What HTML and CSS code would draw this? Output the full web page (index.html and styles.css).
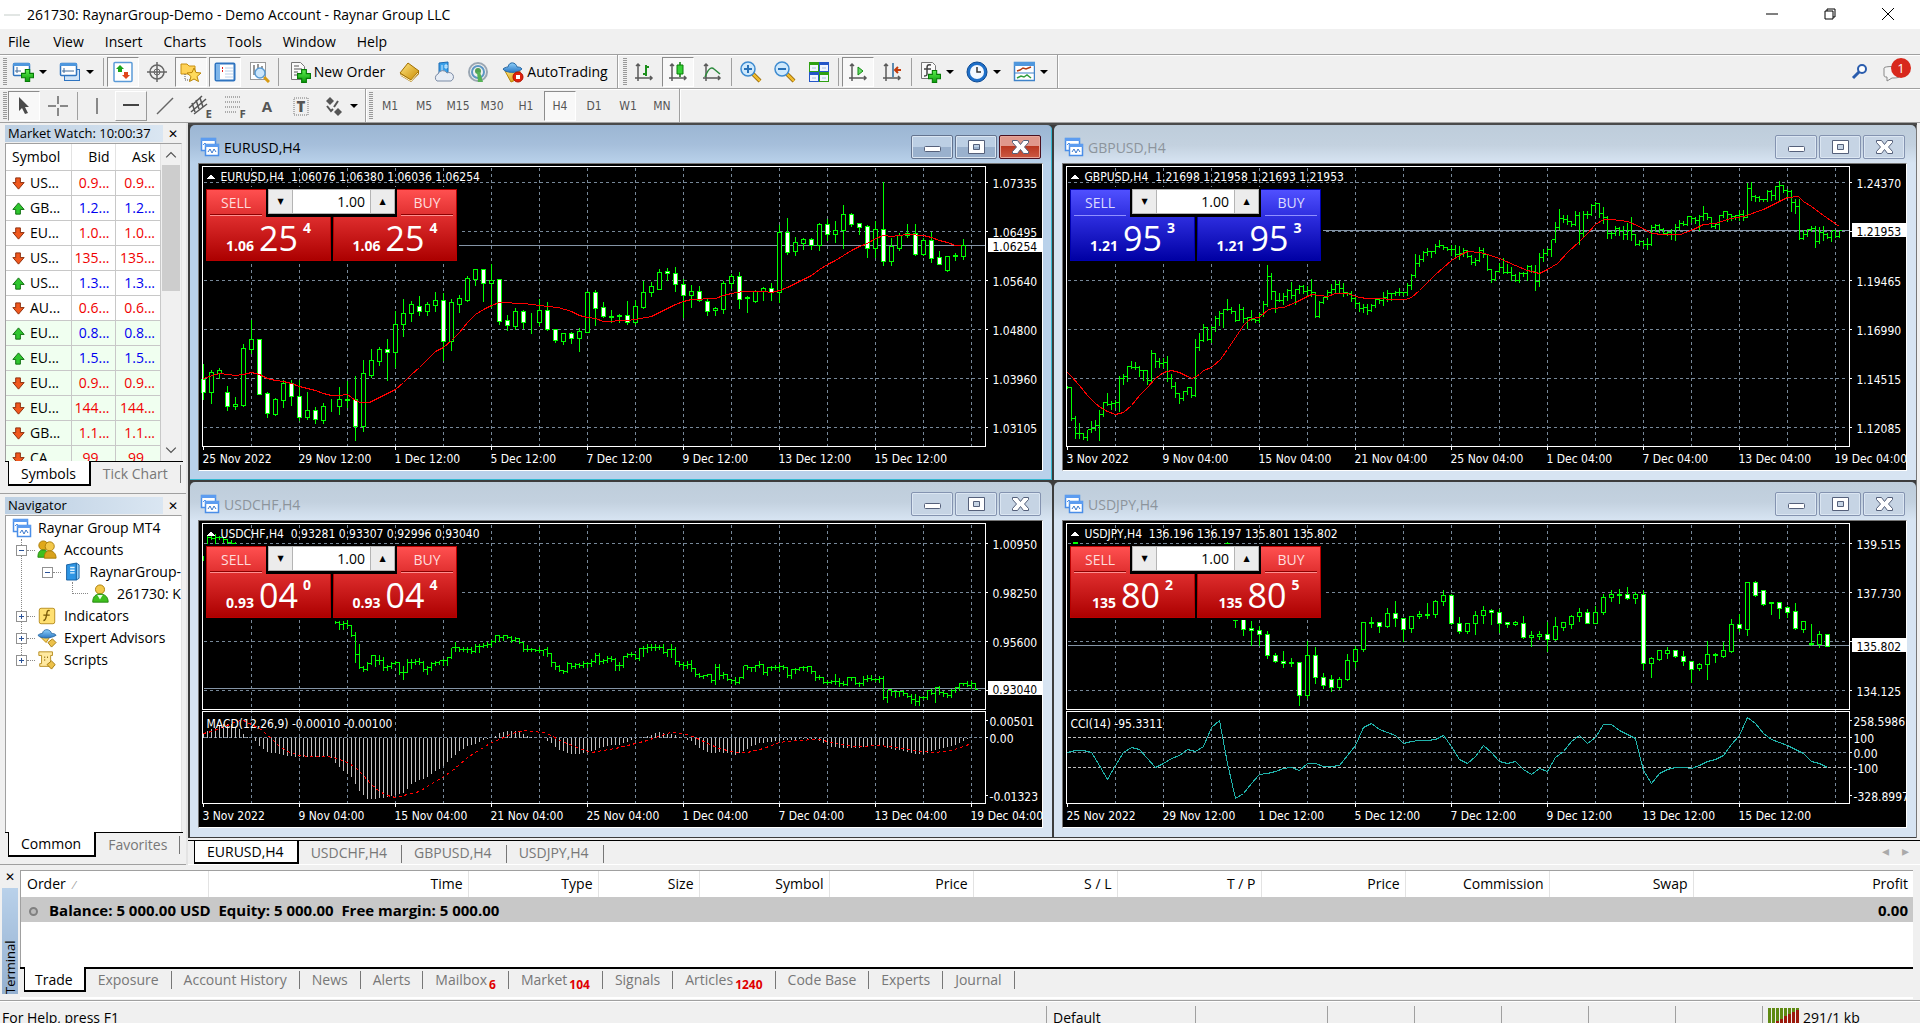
FILE: index.html
```html
<!DOCTYPE html>
<html lang="en">
<head>
<meta charset="utf-8">
<title>261730: RaynarGroup-Demo - Demo Account - Raynar Group LLC</title>
<link rel="stylesheet" href="styles.css">
</head>
<body>
<svg class="sprite" aria-hidden="true">
  <defs>
    <linearGradient id="gold" x1="0" y1="0" x2="1" y2="1"><stop offset="0" stop-color="#ffe680"/><stop offset="1" stop-color="#c98a00"/></linearGradient>
    <linearGradient id="sky" x1="0" y1="0" x2="0" y2="1"><stop offset="0" stop-color="#8fd0fa"/><stop offset="1" stop-color="#2b78c4"/></linearGradient>
    <linearGradient id="leaf" x1="0" y1="0" x2="0" y2="1"><stop offset="0" stop-color="#5df04f"/><stop offset="1" stop-color="#0a9a0a"/></linearGradient>
  </defs>
  <symbol id="plus" viewBox="0 0 12 12"><path d="M4 .5h4V4h3.500v4H8v3.500H4V8H.5V4H4z" fill="url(#leaf)" stroke="#067a06"/></symbol>
  <symbol id="axes" viewBox="0 0 22 22"><path d="M5 3v17M2 17h17M3 5l2-2 2 2M17 15l2 2-2 2" fill="none" stroke="#5a5a5a" stroke-width="1.500"/></symbol>
  <symbol id="i-newchart" viewBox="0 0 22 22"><rect x="1.500" y="2.500" width="16" height="12" rx="1" fill="#fff" stroke="#2f74c0" stroke-width="1.500"/><path d="M1 2h17v3H1z" fill="#4f97dd"/><path d="M5 6v6M3 10h6" stroke="#3f6a9a"/><use href="#plus" x="9" y="8" width="13" height="13"/></symbol>
  <symbol id="i-profiles" viewBox="0 0 22 22"><rect x="5.500" y="8.500" width="15" height="11" fill="#cfe3f7" stroke="#2f74c0"/><rect x="1.500" y="2.500" width="16" height="12" rx="1" fill="#fff" stroke="#2f74c0" stroke-width="1.500"/><path d="M1 2h17v3H1z" fill="#4f97dd"/><path d="M5 7v5M3 10h12" stroke="#3f6a9a"/></symbol>
  <symbol id="i-market" viewBox="0 0 22 22"><rect x="2" y="1.500" width="18" height="19" rx="1" fill="#fff" stroke="#5b9bd8" stroke-width="1.500"/><path d="M8 4l4 4h-2v3H6V8H4z" fill="#19a319"/><path d="M14 18l-4-4h2v-3h4v3h2z" fill="#e0461b"/></symbol>
  <symbol id="i-target" viewBox="0 0 22 22"><circle cx="11" cy="11" r="7" fill="none" stroke="#666" stroke-width="1.500"/><circle cx="11" cy="11" r="3" fill="none" stroke="#666"/><path d="M11 1v20M1 11h20" stroke="#666" stroke-width="1.500"/></symbol>
  <symbol id="i-folder" viewBox="0 0 22 22"><path d="M1 3h6l2 2h6v8H1z" fill="#ffd257" stroke="#c88f10"/><path d="M5 13v6h5" fill="none" stroke="#555" stroke-dasharray="1 1"/><path d="M14 7l2 4.500 5 .5-4 3.500 1.500 5L14 18l-4.500 2.500 1.500-5L7 12l5-.5z" fill="#ffdb5c" stroke="#b98507"/></symbol>
  <symbol id="i-terminal" viewBox="0 0 22 22"><rect x="1.500" y="2.500" width="19" height="17" rx="1" fill="#fff" stroke="#2f74c0" stroke-width="2"/><path d="M2 3h4v16H2z" fill="#7fb6ea"/><path d="M8 7h1M8 10h1" stroke="#e02020" stroke-width="2"/><path d="M11 7h8M11 10h8M11 13h8M11 16h8" stroke="#bcd2ea"/></symbol>
  <symbol id="i-tester" viewBox="0 0 22 22"><rect x="2.500" y="1.500" width="15" height="17" fill="#fff" stroke="#999"/><path d="M6 4v10M10 3v9M14 5v8" stroke="#777" stroke-width="1.500"/><path d="M16 16l5 5" stroke="#d79a12" stroke-width="3"/><circle cx="12" cy="12" r="5" fill="#cbe6fb" stroke="#5b9bd2" stroke-width="1.500"/></symbol>
  <symbol id="i-order" viewBox="0 0 22 22"><path d="M2.500 1.500h9l4 4v13h-13z" fill="#fafafa" stroke="#777"/><path d="M5 5h5M5 8h8M5 11h4M5 14h4" stroke="#555"/><use href="#plus" x="8" y="8" width="14" height="14"/></symbol>
  <symbol id="i-book" viewBox="0 0 22 22"><path d="M9 2l11 8-8 9L1 12z" fill="url(#gold)" stroke="#a06e00"/><path d="M1 12l1 3 10 6 8-8v-3l-8 9z" fill="#a87406"/><path d="M2 14l10 6 7-8" fill="none" stroke="#fff3c0"/></symbol>
  <symbol id="i-cloud" viewBox="0 0 22 22"><path d="M6 2l9-1v12H6z" fill="#3a9fe8" stroke="#1d6cb4"/><path d="M9 4v6M12 4h2v3h-2z" stroke="#cdeaff" fill="#7cc5f7"/><path d="M4 20a4 4 0 0 1 1-7 5 5 0 0 1 9-1 4 4 0 0 1 4 8z" fill="#e8edf5" stroke="#7b8ba5"/></symbol>
  <symbol id="i-signal" viewBox="0 0 22 22"><circle cx="11" cy="11" r="9" fill="none" stroke="#9aa6b2" stroke-width="2"/><circle cx="11" cy="11" r="6" fill="none" stroke="#5d97c4" stroke-width="2"/><circle cx="11" cy="10" r="3" fill="#52a052"/><path d="M10 11h3l3 10h-5z" fill="#56b356"/></symbol>
  <symbol id="i-auto" viewBox="0 0 22 22"><path d="M3 10h15l-2 8-7 3z" fill="url(#gold)" stroke="#b88400"/><path d="M1 8c2 4 14 5 19 0-1-2-4-2-5-2-1-5-8-6-9 0-2 0-4 1-5 2z" fill="url(#sky)" stroke="#2a6aa5"/><circle cx="16" cy="16" r="5" fill="#e0210d" stroke="#b01000"/><path d="M14 14h4v4h-4z" fill="#fff"/></symbol>
  <symbol id="i-bars" viewBox="0 0 22 22"><use href="#axes"/><path d="M13 4v11M13 6h3M10 13h3" stroke="#1c8f1c" stroke-width="2"/></symbol>
  <symbol id="i-candles" viewBox="0 0 22 22"><use href="#axes"/><path d="M13 1v15" stroke="#0a7d0a" stroke-width="1.500"/><path d="M10 4h6v9h-6z" fill="#35d235" stroke="#0a7d0a"/></symbol>
  <symbol id="i-line" viewBox="0 0 22 22"><use href="#axes"/><path d="M4 16C8 6 11 6 13 8l6 5" fill="none" stroke="#2c8a3c" stroke-width="1.500"/></symbol>
  <symbol id="lens" viewBox="0 0 22 22"><path d="M13 13l7 7" stroke="#8a5d00" stroke-width="4"/><path d="M13 13l7 7" stroke="#f0bb2c" stroke-width="2.500"/><circle cx="8" cy="8" r="7" fill="#cfe9fc" stroke="#3e8bd0" stroke-width="1.500"/></symbol>
  <symbol id="i-zoomin" viewBox="0 0 22 22"><use href="#lens"/><path d="M8 4v8M4 8h8" stroke="#2a72b8" stroke-width="2"/></symbol>
  <symbol id="i-zoomout" viewBox="0 0 22 22"><use href="#lens"/><path d="M4 8h8" stroke="#2a72b8" stroke-width="2"/></symbol>
  <symbol id="i-tile" viewBox="0 0 22 22"><path d="M1 1h10v10H1zM11 11h10v10H11z" fill="#2fa012"/><path d="M11 1h10v10H11zM1 11h10v10H1z" fill="#2456c8"/><path d="M2 4h8v6H2zM12 4h8v6h-8zM2 14h8v6H2zM12 14h8v6h-8z" fill="#f2f6ff"/><path d="M4 7h4M14 7h4M4 17h4M14 17h4" stroke="#a8c0dc"/></symbol>
  <symbol id="i-scroll" viewBox="0 0 22 22"><use href="#axes"/><path d="M11 6l5 4-5 4z" fill="#6bdc6b" stroke="#128a12"/></symbol>
  <symbol id="i-shift" viewBox="0 0 22 22"><use href="#axes"/><path d="M12 2v14" stroke="#2a6a9c" stroke-width="1.500"/><path d="M20 9h-6M17 6l-3 3 3 3" fill="none" stroke="#c23b0c" stroke-width="2"/></symbol>
  <symbol id="i-indicators" viewBox="0 0 22 22"><path d="M2.500 1.500h11l3 3v13h-14z" fill="#fafafa" stroke="#777"/><path d="M12 4c-4-1-4 1-4 4v5c0 2-1 2-3 2M5 8h7" fill="none" stroke="#444" stroke-width="1.500"/><use href="#plus" x="9" y="9" width="13" height="13"/></symbol>
  <symbol id="i-clock" viewBox="0 0 22 22"><circle cx="11" cy="11" r="10" fill="#1e6fc8" stroke="#0c4a94"/><circle cx="11" cy="11" r="7" fill="#f4f9ff"/><path d="M11 6v5h4" fill="none" stroke="#333" stroke-width="1.500"/></symbol>
  <symbol id="i-template" viewBox="0 0 22 22"><rect x="1.500" y="1.500" width="20" height="18" fill="#fff" stroke="#3f83c9" stroke-width="1.500"/><path d="M1 1h21v4H1z" fill="#4f97dd"/><path d="M1 12h21" stroke="#3f83c9"/><path d="M4 10l3-1 3-2 3 1 5-2" fill="none" stroke="#b33a12" stroke-width="1.500"/><path d="M4 17l4-2 3 1 3-2 4 3" fill="none" stroke="#2f9d3c" stroke-width="1.500"/></symbol>
  <symbol id="i-cursor" viewBox="0 0 22 22"><path d="M6 2v14l3-3 3 6 3-1-3-6h4z" fill="#4a4a4a"/></symbol>
  <symbol id="i-cross" viewBox="0 0 22 22"><path d="M11 1v8M11 13v8M1 11h8M13 11h8" stroke="#666" stroke-width="1.500"/></symbol>
  <symbol id="i-vline" viewBox="0 0 22 22"><path d="M11 3v16" stroke="#666" stroke-width="1.500"/></symbol>
  <symbol id="i-hline" viewBox="0 0 22 22"><path d="M3 10h16" stroke="#444" stroke-width="2"/></symbol>
  <symbol id="i-trend" viewBox="0 0 22 22"><path d="M3 19L19 3" stroke="#666" stroke-width="1.500"/></symbol>
  <symbol id="i-channel" viewBox="0 0 22 22"><path d="M1 13L14 1M3 17L18 4M6 19L19 9M4 8l3 9M8 5l3 9M12 3l3 9" stroke="#555" stroke-width="1.500"/></symbol>
  <symbol id="i-fibo" viewBox="0 0 22 22"><path d="M3 2h16M3 7h16M3 12h16M3 17h11" stroke="#666" stroke-dasharray="1 1"/></symbol>
  <symbol id="i-label" viewBox="0 0 22 22"><rect x="4" y="3" width="14" height="17" fill="none" stroke="#777" stroke-dasharray="1 1"/></symbol>
  <symbol id="i-shapes" viewBox="0 0 22 22"><path d="M7 2l4 4-4 4-4-4zM15 13l4 4-4 4-4-4z" fill="#555"/><path d="M4 11l4 5 2-2M15 6l-4 6" fill="none" stroke="#555" stroke-width="2"/></symbol>
  <symbol id="i-window" viewBox="0 0 20 20"><rect x="1.500" y="1.500" width="14" height="12" fill="#fff" stroke="#4a8ee8" stroke-width="1.500"/><path d="M1 1h15v3H1z" fill="#5c9cf0"/><path d="M3 8l2-2 2 3" fill="none" stroke="#4a8ee8"/><rect x="5.500" y="7.500" width="13" height="11" fill="#fff" stroke="#4a8ee8" stroke-width="1.500"/><path d="M5 7h14v3H5z" fill="#5c9cf0"/><path d="M8 15l2-3 2 4 2-4 2 3" fill="none" stroke="#3a78cc"/></symbol>
  <symbol id="i-users" viewBox="0 0 22 22"><circle cx="7" cy="6" r="5" fill="#e0a818" stroke="#a87a06"/><path d="M1 19c0-7 3-8 6-8s6 2 6 8z" fill="#3fbf1f" stroke="#23860e"/><circle cx="14" cy="7" r="5" fill="#f3c84a" stroke="#a87a06"/><path d="M8 20c0-7 3-8 6-8s7 2 7 8z" fill="#d8a21c" stroke="#a87a06"/></symbol>
  <symbol id="i-user" viewBox="0 0 22 22"><circle cx="11" cy="6" r="5" fill="#f3c84a" stroke="#a87a06"/><path d="M3 20c0-7 4-9 8-9s9 2 9 9z" fill="#3fbf1f" stroke="#23860e"/><path d="M8 12l3 5 3-5z" fill="#eaffea"/></symbol>
  <symbol id="i-server" viewBox="0 0 22 22"><path d="M4 3l11-2v19H4z" fill="#2d95e4" stroke="#155d9e"/><path d="M15 1l3 2v15l-3 2z" fill="#8fcdf8" stroke="#155d9e"/><path d="M8 6h5M8 9h5M8 12h5" stroke="#e5f5ff" stroke-width="1.500"/></symbol>
  <symbol id="i-function" viewBox="0 0 22 22"><rect x="2.500" y="2.500" width="17" height="17" rx="2" fill="#ffe071" stroke="#b58a1a"/><path d="M14 5c-3-1-3 2-3.500 5s-1 6-3.500 6M7 10h7" fill="none" stroke="#7a5a08" stroke-width="1.500"/></symbol>
  <symbol id="i-expert" viewBox="0 0 22 22"><path d="M4 10h10l-4 6z" fill="#f6cf5c" stroke="#b88400"/><path d="M1 8c3 4 14 4 20 0-1-2-4-2-5-2-1-5-9-6-10 0-2 0-4 1-5 2z" fill="url(#sky)" stroke="#2a6aa5"/><path d="M17 12l4 4-5 5-4-5z" fill="#ecc14a" stroke="#a07608"/></symbol>
  <symbol id="i-script" viewBox="0 0 22 22"><path d="M2 2h15v4h-2v9h2v3H3v-3h2V6H2z" fill="#ffe9a0" stroke="#b58a1a"/><path d="M8 8h1M11 8h1M8 11h1" stroke="#8a6a12" stroke-width="1.500"/><path d="M16 12l4 4-4 5-5-5z" fill="#ecc14a" stroke="#a07608"/></symbol>
  <symbol id="i-down" viewBox="0 0 16 16"><path d="M5 2h5v5h4l-6 7-6-7h3z" fill="#f0581e" stroke="#8a2a08"/></symbol>
  <symbol id="i-up" viewBox="0 0 16 16"><path d="M5 14h5V9h4L8 2 2 9h3z" fill="#2fc62f" stroke="#0c6a0c"/></symbol>
  <symbol id="w-min" viewBox="0 0 20 16"><rect x="2.500" y="7.500" width="16" height="5" rx="1" fill="#fff" stroke="#55607a"/></symbol>
  <symbol id="w-max" viewBox="0 0 20 16"><path d="M2.500 1.500h16v13h-16zM7.500 5.500v5h6v-5z" fill="#fff" fill-rule="evenodd" stroke="#55607a"/></symbol>
  <symbol id="w-close" viewBox="0 0 20 16"><path d="M2.500 1.500h5l3 4 3-4h5v2l-4 4.500 4 4.500v2h-5l-3-4-3 4h-5v-2l4-4.500-4-4.500z" fill="#fff" stroke="#55607a"/></symbol>
</svg>

<header class="titlebar">
  <span class="app-mark"></span>
  <h1>261730: RaynarGroup-Demo - Demo Account - Raynar Group LLC</h1>
  <div class="system-buttons">
    <button aria-label="Minimize"><svg viewBox="0 0 12 12"><path d="M0 6h12"/></svg></button>
    <button aria-label="Restore"><svg viewBox="0 0 12 12"><path d="M1 3h8v8H1zM3 3V1h8v8H9"/></svg></button>
    <button aria-label="Close"><svg viewBox="0 0 12 12"><path d="M0 0l12 12M12 0L0 12"/></svg></button>
  </div>
</header>

<nav class="menubar">
  <button>File</button><button>View</button><button>Insert</button><button>Charts</button><button>Tools</button><button>Window</button><button>Help</button>
</nav>

<div class="toolbar">
  <i class="grip"></i>
  <button class="tool drop" aria-label="New chart"><svg><use href="#i-newchart"/></svg></button>
  <button class="tool drop" aria-label="Profiles"><svg><use href="#i-profiles"/></svg></button>
  <i class="rule"></i>
  <button class="tool pressed" aria-label="Market Watch"><svg><use href="#i-market"/></svg></button>
  <button class="tool" aria-label="Data Window"><svg><use href="#i-target"/></svg></button>
  <button class="tool pressed" aria-label="Navigator"><svg><use href="#i-folder"/></svg></button>
  <button class="tool pressed" aria-label="Terminal"><svg><use href="#i-terminal"/></svg></button>
  <button class="tool" aria-label="Strategy Tester"><svg><use href="#i-tester"/></svg></button>
  <i class="rule"></i>
  <button class="tool order"><svg><use href="#i-order"/></svg>New Order</button>
  <button class="tool" aria-label="MetaEditor"><svg><use href="#i-book"/></svg></button>
  <button class="tool" aria-label="Cloud"><svg><use href="#i-cloud"/></svg></button>
  <button class="tool" aria-label="Signals"><svg><use href="#i-signal"/></svg></button>
  <button class="tool auto"><svg><use href="#i-auto"/></svg>AutoTrading</button>
  <i class="rule full"></i>
  <i class="grip"></i>
  <button class="tool" aria-label="Bar chart"><svg><use href="#i-bars"/></svg></button>
  <button class="tool pressed" aria-label="Candlesticks"><svg><use href="#i-candles"/></svg></button>
  <button class="tool" aria-label="Line chart"><svg><use href="#i-line"/></svg></button>
  <i class="rule"></i>
  <button class="tool" aria-label="Zoom in"><svg><use href="#i-zoomin"/></svg></button>
  <button class="tool" aria-label="Zoom out"><svg><use href="#i-zoomout"/></svg></button>
  <button class="tool" aria-label="Tile windows"><svg><use href="#i-tile"/></svg></button>
  <i class="rule"></i>
  <button class="tool pressed" aria-label="Auto scroll"><svg><use href="#i-scroll"/></svg></button>
  <button class="tool" aria-label="Chart shift"><svg><use href="#i-shift"/></svg></button>
  <i class="rule"></i>
  <button class="tool drop" aria-label="Indicators"><svg><use href="#i-indicators"/></svg></button>
  <button class="tool drop" aria-label="Periods"><svg><use href="#i-clock"/></svg></button>
  <button class="tool drop" aria-label="Templates"><svg><use href="#i-template"/></svg></button>
  <i class="rule full"></i>
  <div class="toolbar-end">
    <button aria-label="Search"><svg viewBox="0 0 20 20"><circle cx="12" cy="7" r="4" fill="#fff" stroke="#2a5cad" stroke-width="2"/><path d="M9 10l-6 6" stroke="#2a5cad" stroke-width="3"/></svg></button>
    <button class="messages" aria-label="Messages"><svg viewBox="0 0 20 20"><path d="M2 6c0-2 16-2 16 0v8c0 2-6 2-8 2l-5 3v-4c-2 0-3 0-3-2z" fill="#f4f4f4" stroke="#888"/></svg><span class="badge">1</span></button>
  </div>
</div>

<div class="toolbar">
  <i class="grip"></i>
  <button class="tool pressed" aria-label="Cursor"><svg><use href="#i-cursor"/></svg></button>
  <button class="tool" aria-label="Crosshair"><svg><use href="#i-cross"/></svg></button>
  <i class="rule"></i>
  <button class="tool" aria-label="Vertical line"><svg><use href="#i-vline"/></svg></button>
  <button class="tool raised" aria-label="Horizontal line"><svg><use href="#i-hline"/></svg></button>
  <button class="tool" aria-label="Trendline"><svg><use href="#i-trend"/></svg></button>
  <button class="tool letter" aria-label="Equidistant channel"><svg><use href="#i-channel"/></svg><sub>E</sub></button>
  <button class="tool letter" aria-label="Fibonacci"><svg><use href="#i-fibo"/></svg><sub>F</sub></button>
  <button class="tool text-tool">A</button>
  <button class="tool label-tool"><svg><use href="#i-label"/></svg><b>T</b></button>
  <button class="tool drop" aria-label="Arrows"><svg><use href="#i-shapes"/></svg></button>
  <i class="rule full tight"></i>
  <i class="grip"></i>
  <button class="tool frame">M1</button><button class="tool frame">M5</button><button class="tool frame">M15</button><button class="tool frame">M30</button><button class="tool frame">H1</button><button class="tool frame pressed">H4</button><button class="tool frame">D1</button><button class="tool frame">W1</button><button class="tool frame">MN</button>
  <i class="rule full tight"></i>
</div>

<main class="workspace">
  <aside class="sidebar">
    <section class="panel watch">
      <header class="panel-head"><h2>Market Watch: 10:00:37</h2><button aria-label="Close Market Watch">✕</button></header>
      <div class="panel-body watch-body">
        <table>
          <thead><tr><th>Symbol</th><th>Bid</th><th>Ask</th></tr></thead>
          <tbody>
            <tr class="down"><td><svg><use href="#i-down"/></svg>US...</td><td>0.9...</td><td>0.9...</td></tr>
            <tr class="up"><td><svg><use href="#i-up"/></svg>GB...</td><td>1.2...</td><td>1.2...</td></tr>
            <tr class="down"><td><svg><use href="#i-down"/></svg>EU...</td><td>1.0...</td><td>1.0...</td></tr>
            <tr class="down"><td><svg><use href="#i-down"/></svg>US...</td><td>135...</td><td>135...</td></tr>
            <tr class="up"><td><svg><use href="#i-up"/></svg>US...</td><td>1.3...</td><td>1.3...</td></tr>
            <tr class="down"><td><svg><use href="#i-down"/></svg>AU...</td><td>0.6...</td><td>0.6...</td></tr>
            <tr class="up cross"><td><svg><use href="#i-up"/></svg>EU...</td><td>0.8...</td><td>0.8...</td></tr>
            <tr class="up cross"><td><svg><use href="#i-up"/></svg>EU...</td><td>1.5...</td><td>1.5...</td></tr>
            <tr class="down cross"><td><svg><use href="#i-down"/></svg>EU...</td><td>0.9...</td><td>0.9...</td></tr>
            <tr class="down cross"><td><svg><use href="#i-down"/></svg>EU...</td><td>144...</td><td>144...</td></tr>
            <tr class="down cross"><td><svg><use href="#i-down"/></svg>GB...</td><td>1.1...</td><td>1.1...</td></tr>
            <tr class="down cross"><td><svg><use href="#i-down"/></svg>CA...</td><td>99...</td><td>99...</td></tr>
          </tbody>
        </table>
        <div class="scrollbar">
          <svg viewBox="0 0 10 6"><path d="M1 5l4-4 4 4"/></svg>
          <i class="thumb"></i>
          <svg class="last" viewBox="0 0 10 6"><path d="M1 1l4 4 4-4"/></svg>
        </div>
      </div>
      <nav class="tabs"><button class="active">Symbols</button><button>Tick Chart</button></nav>
    </section>
    <section class="panel navigator">
      <header class="panel-head"><h2>Navigator</h2><button aria-label="Close Navigator">✕</button></header>
      <div class="panel-body">
        <ul class="tree">
          <li class="root"><svg><use href="#i-window"/></svg>Raynar Group MT4</li>
          <li><i class="toggle open"></i><svg><use href="#i-users"/></svg>Accounts</li>
          <li class="deep"><i class="toggle open"></i><svg><use href="#i-server"/></svg>RaynarGroup-</li>
          <li class="deeper"><i class="stem"></i><svg><use href="#i-user"/></svg>261730: K</li>
          <li><i class="toggle"></i><svg><use href="#i-function"/></svg>Indicators</li>
          <li><i class="toggle"></i><svg><use href="#i-expert"/></svg>Expert Advisors</li>
          <li><i class="toggle"></i><svg><use href="#i-script"/></svg>Scripts</li>
        </ul>
      </div>
      <nav class="tabs"><button class="active">Common</button><button>Favorites</button></nav>
    </section>
  </aside>

  <div class="desk">
    <div class="windows">
      <section class="window active">
        <header><svg><use href="#i-window"/></svg><h3>EURUSD,H4</h3>
          <button aria-label="Minimize"><svg><use href="#w-min"/></svg></button><button aria-label="Maximize"><svg><use href="#w-max"/></svg></button><button class="close" aria-label="Close"><svg><use href="#w-close"/></svg></button></header>
        <div class="chart" data-chart="eurusd">
          <div class="trade">
            <button class="side"><span class="action">SELL</span><span class="price"><b>1.06</b><em>25</em><sup>4</sup></span></button>
            <button class="side buy"><span class="action">BUY</span><span class="price"><b>1.06</b><em>25</em><sup>4</sup></span></button>
            <div class="volume"><button aria-label="Decrease">▼</button><input aria-label="Volume" value="1.00"><button aria-label="Increase">▲</button></div>
          </div>
        </div>
      </section>
      <section class="window">
        <header><svg><use href="#i-window"/></svg><h3>GBPUSD,H4</h3>
          <button aria-label="Minimize"><svg><use href="#w-min"/></svg></button><button aria-label="Maximize"><svg><use href="#w-max"/></svg></button><button class="close" aria-label="Close"><svg><use href="#w-close"/></svg></button></header>
        <div class="chart" data-chart="gbpusd">
          <div class="trade blue">
            <button class="side"><span class="action">SELL</span><span class="price"><b>1.21</b><em>95</em><sup>3</sup></span></button>
            <button class="side buy"><span class="action">BUY</span><span class="price"><b>1.21</b><em>95</em><sup>3</sup></span></button>
            <div class="volume"><button aria-label="Decrease">▼</button><input aria-label="Volume" value="1.00"><button aria-label="Increase">▲</button></div>
          </div>
        </div>
      </section>
      <section class="window">
        <header><svg><use href="#i-window"/></svg><h3>USDCHF,H4</h3>
          <button aria-label="Minimize"><svg><use href="#w-min"/></svg></button><button aria-label="Maximize"><svg><use href="#w-max"/></svg></button><button class="close" aria-label="Close"><svg><use href="#w-close"/></svg></button></header>
        <div class="chart" data-chart="usdchf">
          <div class="trade">
            <button class="side"><span class="action">SELL</span><span class="price"><b>0.93</b><em>04</em><sup>0</sup></span></button>
            <button class="side buy"><span class="action">BUY</span><span class="price"><b>0.93</b><em>04</em><sup>4</sup></span></button>
            <div class="volume"><button aria-label="Decrease">▼</button><input aria-label="Volume" value="1.00"><button aria-label="Increase">▲</button></div>
          </div>
        </div>
      </section>
      <section class="window">
        <header><svg><use href="#i-window"/></svg><h3>USDJPY,H4</h3>
          <button aria-label="Minimize"><svg><use href="#w-min"/></svg></button><button aria-label="Maximize"><svg><use href="#w-max"/></svg></button><button class="close" aria-label="Close"><svg><use href="#w-close"/></svg></button></header>
        <div class="chart" data-chart="usdjpy">
          <div class="trade">
            <button class="side"><span class="action">SELL</span><span class="price"><b>135</b><em>80</em><sup>2</sup></span></button>
            <button class="side buy"><span class="action">BUY</span><span class="price"><b>135</b><em>80</em><sup>5</sup></span></button>
            <div class="volume"><button aria-label="Decrease">▼</button><input aria-label="Volume" value="1.00"><button aria-label="Increase">▲</button></div>
          </div>
        </div>
      </section>
    </div>
    <nav class="tabs chart-tabs">
      <button class="active">EURUSD,H4</button><button>USDCHF,H4</button><button>GBPUSD,H4</button><button>USDJPY,H4</button>
      <span class="scroll-arrows"><i>◂</i><i>▸</i></span>
    </nav>
  </div>
</main>

<section class="terminal">
  <div class="terminal-rail"><button aria-label="Close Terminal">✕</button><h2>Terminal</h2></div>
  <div class="terminal-main">
    <div class="terminal-body">
      <table>
        <colgroup><col class="c-order"><col class="c-time"><col class="c-type"><col class="c-size"><col class="c-type"><col class="c-price"><col class="c-price"><col class="c-price"><col class="c-price"><col class="c-price"><col class="c-price"><col></colgroup>
        <thead><tr><th>Order <small>⁄</small></th><th>Time</th><th>Type</th><th>Size</th><th>Symbol</th><th>Price</th><th>S / L</th><th>T / P</th><th>Price</th><th>Commission</th><th>Swap</th><th>Profit</th></tr></thead>
        <tbody><tr><td colspan="11"><i class="dot"></i>Balance: 5 000.00 USD&nbsp; Equity: 5 000.00&nbsp; Free margin: 5 000.00</td><td>0.00</td></tr></tbody>
      </table>
    </div>
    <nav class="tabs">
      <button class="active">Trade</button><button>Exposure</button><button>Account History</button><button>News</button><button>Alerts</button><button>Mailbox<sub>6</sub></button><button>Market<sub>104</sub></button><button>Signals</button><button>Articles<sub>1240</sub></button><button>Code Base</button><button>Experts</button><button>Journal</button>
    </nav>
  </div>
</section>

<footer class="status">
  <span class="help">For Help, press F1</span>
  <span class="profile">Default</span>
  <span class="w132"></span><span class="w88"></span><span class="w88"></span><span class="w88"></span><span class="w88"></span><span class="w88"></span>
  <span class="traffic"><svg viewBox="0 0 32 18"><path d="M1 0h3v18H1zM5 0h3v16H5zM9 0h3v13H9zM13 0h3v11h-3zM17 0h3v9h-3zM21 0h3v6h-3zM25 0h3v4h-3zM29 0h3v2h-3z" fill="#5f8a12"/><path d="M5 15h3v3H5zM9 13h3v5H9zM13 11h3v7h-3zM17 8h3v10h-3zM21 6h3v12h-3zM25 4h3v14h-3zM29 2h3v16h-3z" fill="#9c1a0c"/></svg>291/1 kb</span>
</footer>
<script src="charts.js"></script>
</body>
</html>
```

FILE: styles.css
```css
* { box-sizing: border-box; }
body {
  margin: 0;
  height: 100vh;
  display: flex;
  flex-direction: column;
  overflow: hidden;
  background: #f0f0f0;
  color: #000;
  font: 14px/20px "Open Sans", "Noto Sans", sans-serif;
}
h1, h2, h3 { margin: 0; font-size: 14px; font-weight: 400; }
button { margin: 0; padding: 0; border: 0; background: none; color: inherit; font: inherit; }
.sprite { position: absolute; width: 0; height: 0; }

/* Title bar and menu */
.titlebar { flex: none; display: flex; align-items: center; height: 29px; background: #fff; }
.app-mark { width: 16px; height: 2px; margin: 0 7px 0 4px; background: #e2e6e4; }
.titlebar h1 { flex: 1; }
.system-buttons { display: flex; padding-right: 3px; }
.system-buttons button { width: 58px; height: 29px; }
.system-buttons svg { width: 12px; height: 12px; fill: none; stroke: #000; }
.menubar { flex: none; display: flex; gap: 1px; height: 25px; }
.menubar button { padding: 0 10px; }
.menubar button:first-child { padding: 0 12px 0 8px; }

/* Toolbars */
.toolbar { flex: none; display: flex; align-items: center; height: 34px; border-top: 1px solid #a0a0a0; box-shadow: inset 0 1px #fff; }
.grip { width: 4px; height: 28px; margin: 0 0 0 3px; background: repeating-linear-gradient(#999 0 1px, transparent 1px 2px); }
.tool { position: relative; display: flex; align-items: center; justify-content: center; width: 32px; height: 30px; margin: 0 1px; border: 1px solid transparent; white-space: nowrap; }
.tool svg { width: 22px; height: 22px; flex: none; }
.pressed { border-color: #8c8c8c #fff #fff #8c8c8c; background: #f8f8f8; }
.raised { border-color: #fff #999 #999 #fff; }
.drop { width: 45px; justify-content: flex-start; gap: 5px; padding-left: 3px; }
.drop::after { content: ""; border: 4px solid transparent; border-top-color: #000; border-bottom: 0; }
.rule { width: 1px; height: 28px; margin: 0 2px; background: #a0a0a0; }
.rule.full { height: 33px; box-shadow: 1px 0 #fff; }
.rule.tight { margin: 0; }
.order { width: 110px; gap: 3px; }
.auto { width: 118px; gap: 3px; }
.text-tool, .label-tool { color: #555; font-weight: 700; font-size: 15px; }
.label-tool b { position: absolute; }
.letter sub { position: absolute; right: 2px; bottom: 0; color: #555; font: 700 10px/11px "DejaVu Sans Condensed", sans-serif; }
.frame { color: #555; font: 12px/20px "DejaVu Sans Condensed", sans-serif; }
.toolbar-end { display: flex; align-items: center; gap: 12px; margin-left: auto; padding-right: 8px; }
.toolbar-end svg { display: block; width: 20px; height: 20px; }
.messages { position: relative; width: 30px; }
.badge { position: absolute; left: 9px; top: -4px; width: 20px; height: 20px; border-radius: 10px; background: #d8281c; color: #fff; font-size: 13px; line-height: 20px; }

/* Workspace */
.workspace { flex: 1; min-height: 0; display: flex; border-top: 1px solid #a0a0a0; }
.sidebar { width: 188px; flex: none; display: flex; flex-direction: column; border-right: 2px solid #e3e3e3; }
.panel { display: flex; flex-direction: column; padding: 2px 3px 0 5px; }
.watch { height: 371px; border-bottom: 1px solid #a0a0a0; }
.navigator { flex: 1; padding-top: 3px; border-bottom: 1px solid #a0a0a0; }
.panel-head { display: flex; height: 17px; margin-bottom: 1px; }
.panel-head h2 { width: 158px; padding-left: 3px; background: linear-gradient(90deg, #bccfe2, #dae6f2); font-size: 13px; line-height: 16px; white-space: nowrap; }
.panel-head button { flex: 1; font: 12px/16px "DejaVu Sans", sans-serif; }
.panel-body { flex: 1; min-height: 0; margin-right: 1px; overflow: hidden; border: 1px solid #a0a0a0; border-bottom: 0; border-right-color: #e3e3e3; background: #fff; }
.watch-body { display: flex; }
.watch table { width: 155px; flex: none; align-self: flex-start; border-collapse: collapse; table-layout: fixed; }
.watch th, .watch td { height: 25px; padding: 0 5px 0 0; border: 1px solid #c8c8c8; border-width: 0 1px 1px 0; font-weight: 400; text-align: right; line-height: 20px; white-space: nowrap; overflow: hidden; }
.watch th { height: 26px; border-right-color: #e3e3e3; }
.watch th:first-child, .watch td:first-child { width: 65px; padding-left: 5px; text-align: left; }
.watch th:first-child { padding-left: 6px; }
.watch th:nth-child(2) { width: 44px; }
.watch td svg { width: 15px; height: 15px; margin-right: 4px; vertical-align: -3px; }
.down td + td { color: #f00000; }
.up td + td { color: #0000f0; }
.cross { background: #f0fff0; }
.scrollbar { flex: 1; display: flex; flex-direction: column; align-items: center; padding: 7px 1px 7px 1px; background: #f0f0f0; }
.scrollbar svg { width: 12px; height: 8px; fill: none; stroke: #505050; stroke-width: 1px; }
.scrollbar .thumb { align-self: stretch; height: 126px; margin-top: 6px; background: #cdcdcd; }
.scrollbar .last { margin-top: auto; }

/* Bottom-hung tab strips shared by panels, charts and the terminal */
.tabs { flex: none; display: flex; align-items: flex-start; height: 32px; color: #777; }
.tabs button { position: relative; height: 25px; padding: 0 13px 0 12px; line-height: 24px; white-space: nowrap; }
.tabs::before { content: ""; align-self: flex-start; width: 3px; height: 1px; background: #000; }
.panel .tabs { box-shadow: inset 0 1px #000; }
.tabs button:not(.active)::after { content: ""; position: absolute; right: 0; top: 4px; width: 1px; height: 18px; background: #777; }
.tabs .active { height: 25px; border: 1px solid #000; border-width: 0 2px 2px 1px; background: #fff; color: #000; }
.tabs sub { margin-left: 2px; color: #e00000; font-size: 12px; font-weight: 700; line-height: 0; vertical-align: -4px; }
.watch .tabs button { line-height: 26px; }

/* Navigator tree */
.tree { position: relative; margin: 0; padding: 1px 0 0; list-style: none; }
.tree::before { content: ""; position: absolute; left: 15px; top: 23px; height: 122px; border-left: 1px dotted #888; }
.tree li { position: relative; display: flex; align-items: center; height: 22px; padding-left: 10px; white-space: nowrap; }
.tree svg { width: 20px; height: 20px; margin-right: 7px; }
.tree .root { padding-left: 6px; }
.tree .root svg { margin-right: 6px; }
.tree .deep { padding-left: 36px; }
.tree .deeper { padding-left: 66px; }
.toggle { position: relative; width: 11px; height: 11px; margin-right: 10px; border: 1px solid #919191; background: linear-gradient(#2a5298, #2a5298) 2px 4px / 5px 1px no-repeat, linear-gradient(#2a5298, #2a5298) 4px 2px / 1px 5px no-repeat, #fff; }
.toggle.open { background: linear-gradient(#2a5298, #2a5298) 2px 4px / 5px 1px no-repeat, #fff; }
.toggle::after { content: ""; position: absolute; left: 10px; top: 4px; width: 8px; border-top: 1px dotted #888; }
.stem { width: 16px; height: 12px; margin: -12px 2px 0 0; border: 1px dotted #888; border-width: 0 0 1px 1px; }

/* Chart desk */
.desk { flex: 1; min-width: 0; display: flex; flex-direction: column; }
.windows { flex: 1; min-height: 0; display: grid; grid-template: 1fr 1fr / 1fr 1fr; gap: 2px; padding: 0 1px 1px 2px; border: solid #4a4a4a; border-width: 2px 0 0; box-shadow: inset -1px 0 #777; background: #3c3c3c; margin-right: 3px; }
.window { min-width: 0; display: flex; flex-direction: column; padding: 0 9px 9px 8px; border-radius: 5px 5px 0 0; background: linear-gradient(#becddb, #c3d1df 20px, #d7e4f2 38px); }
.window.active { background: linear-gradient(#9cb6d3, #a6bfdb 20px, #b9d1ea 38px); box-shadow: inset -1px -1px #35b8d0; }
.window header { display: flex; align-items: center; gap: 2px; height: 38px; padding: 0 2px 0 2px; }
.window header svg { width: 20px; height: 20px; flex: none; }
.window h3 { flex: 1; padding: 7px 0 0 2px; color: #8c949c; }
.window.active h3 { color: #000; }
.window header > svg { margin-top: 6px; }
.window header button { display: flex; align-items: center; justify-content: center; width: 42px; height: 24px; margin-top: 6px; border: 1px solid #8493b0; border-radius: 2px; background: #c6d4e4; box-shadow: inset 0 0 0 1px #dbe6f2; }
.window header button svg { width: 20px; height: 16px; }
.window.active header button { border-color: #64748f; background: linear-gradient(#bccfe4 50%, #9ab1cd 50%); }
.window.active header .close { border-color: #4a1020; background: linear-gradient(#e0988c 45%, #b9361f 45%, #cc5a44); box-shadow: inset 0 0 0 1px #e8a79b; }
.chart { position: relative; flex: 1; min-height: 0; overflow: hidden; border: 1px solid #fff; border-color: #777 #fff #fff #777; background: #000; }
.plot { display: block; width: 100%; height: 100%; font: 12px "DejaVu Sans Condensed", "DejaVu Sans", sans-serif; }

/* One-click trading panel */
.trade { position: absolute; left: 5px; top: 23px; display: flex; gap: 2px; padding: 2px; background: #000; }
.side { display: flex; flex-direction: column; width: 125px; height: 72px; border: 1px solid #b80000; background: linear-gradient(#ff5050, #dd2c2c 40%, #ac0000); color: #fff; }
.side.buy { width: 124px; }
.blue .side { border-color: #0000b0; background: linear-gradient(#5050ff, #2c2cdd 40%, #0000a4); }
.action { width: 52px; height: 26px; margin: 0 3px; border-bottom: 1px solid #ff9090; box-shadow: 0 -1px #8b0000 inset; color: #ffdcdc; line-height: 25px; }
.blue .action { border-bottom-color: #9090ff; box-shadow: none; color: #dcdcff; }
.buy .action { align-self: flex-end; }
.price { display: flex; align-items: flex-end; justify-content: center; align-self: stretch; height: 44px; gap: 5px; }
.price b { font-size: 14px; line-height: 28px; }
.price em { font-size: 34px; line-height: 44px; font-style: normal; }
.price sup { align-self: flex-start; font-size: 14px; font-weight: 700; line-height: 24px; }
.volume { position: absolute; left: 62px; top: 2px; display: flex; width: 131px; height: 28px; padding: 0 2px 3px; background: #000; }
.volume button { width: 25px; border: 1px solid #b4b4b4; background: #ececec; font: 8px/20px "DejaVu Sans", sans-serif; }
.volume input { flex: 1; min-width: 0; padding: 0 5px; border: solid #b4b4b4; border-width: 1px 0; background: #fff; font: inherit; text-align: right; border-radius: 0; }

/* Chart tabs */
.chart-tabs { height: 25px; border-top: 1px solid #000; margin-top: 2px; box-shadow: inset 0 -1px #fff; }
.chart-tabs::before { width: 6px; background: none; }
.chart-tabs button { height: 23px; padding: 0 15px 0 12px; line-height: 22px; }
.chart-tabs .active { height: 23px; padding: 0 13px 0 12px; }
.scroll-arrows { display: flex; gap: 13px; margin-left: auto; padding-right: 11px; color: #aaa; font: 14px/20px "DejaVu Sans", sans-serif; }
.scroll-arrows i { font-style: normal; }

/* Terminal */
.terminal { flex: none; display: flex; height: 135px; }
.terminal-rail { width: 19px; flex: none; display: flex; flex-direction: column; align-items: center; padding: 4px 1px 6px 2px; }
.terminal-rail button { height: 16px; margin-bottom: 3px; font: 12px/14px "DejaVu Sans", sans-serif; }
.terminal-rail h2 { flex: 1; width: 16px; writing-mode: vertical-rl; rotate: 180deg; background: linear-gradient(#94b0d0, #b9d1ea); font-size: 13px; line-height: 16px; }
.terminal-main { flex: 1; min-width: 0; display: flex; flex-direction: column; padding: 5px 7px 0 1px; }
.terminal-body { flex: 1; border: 1px solid #a0a0a0; border-width: 1px 0 0 1px; background: #fff; }
.terminal table { width: 100%; border-collapse: collapse; table-layout: fixed; }
.terminal th { height: 26px; padding: 0 5px; border-right: 1px solid #e3e3e3; font-weight: 400; text-align: right; line-height: 20px; }
.terminal th:first-child, .terminal td:first-child { padding-left: 6px; text-align: left; }
.terminal th:last-child { border: 0; }
.terminal th small { margin-left: 4px; color: #999; }
.terminal td { height: 25px; padding: 0 5px; background: #c8c8c8; font-size: 15px; font-weight: 700; text-align: right; line-height: 20px; }
.dot { display: inline-block; width: 9px; height: 9px; margin: 0 11px 0 2px; border: 2px solid #808080; border-radius: 5px; background: #bbb; }
.c-order { width: 187px; }
.c-time { width: 260px; }
.c-type { width: 130px; }
.c-size { width: 101px; }
.c-price { width: 144px; }
.terminal .tabs { box-shadow: inset 0 2px #000, inset 0 -2px #fff; margin-bottom: 1px; }
.terminal .tabs::before { width: 4px; }
.terminal .tabs button { line-height: 26px; }
.terminal .tabs .active { padding: 0 11px 0 10px; }

/* Status bar */
.status { flex: none; display: flex; height: 23px; overflow: hidden; border-top: 1px solid #a0a0a0; box-shadow: inset 0 1px #fff; }
.status span { height: 30px; margin-top: 5px; padding-top: 2px; border-right: 1px solid #a0a0a0; }
.status .help { flex: 1; padding-left: 2px; }
.status .profile { width: 149px; padding-left: 6px; }
.w132 { width: 132px; }
.w88 { width: 87px; }
.status .traffic { display: flex; gap: 4px; width: 157px; padding-left: 4px; border: 0; }
.traffic svg { width: 32px; height: 18px; }
```

FILE: charts.js
```js
// Heights are stored in chart steps, three to a pixel; `top` and `left` are the steps
// at the plot's origin. Candles: high, body top, body bottom, low (w = falling).
// Bars: high, low, close; each bar opens at the close before it.
const charts = {
  eurusd: {
    top: 132, left: 27, title: 'EURUSD,H4  1.06076 1.06380 1.06036 1.06254',
    rows: [18, 67, 116, 165, 214, 263], scale: ['1.07335', '1.06495', '1.05640', '1.04800', '1.03960', '1.03105'],
    price: 81, tag: '1.06254',
    dates: ['25 Nov 2022', '29 Nov 12:00', '1 Dec 12:00', '5 Dec 12:00', '7 Dec 12:00', '9 Dec 12:00', '13 Dec 12:00', '15 Dec 12:00'],
    candles: `730 778 815 836 w|747 757 815 849|741 751 758 773|795 817 857 869 w|828 853 857 866|669 685 855 857|597 658 686 700|658 658 822 822 w|812 819 878 890 w|831 838 881 884|776 790 839 861|778 790 829 856 w|777 829 890 900 w|812 870 890 896|858 870 896 908 w|847 858 899 908|834 856 856 872|797 838 857 881|780 838 841 862|765 838 917 960 w|717 760 917 933|684 720 765 770|678 688 722 735|654 688 695 779 w|570 613 695 740|534 580 613 648|540 553 580 602|525 558 572 584 w|544 553 572 584|513 541 554 572|516 541 662 720 w|534 546 662 690|522 535 551 575|465 475 539 542|444 448 476 495|447 448 490 543 w|429 481 490 560|474 478 602 611 w|583 601 614 629 w|562 574 617 627|567 574 605 624 w|577 604 604 638|535 571 605 616|543 571 626 629 w|624 626 659 665 w|638 640 662 671|632 640 653 668 w|621 633 653 692|510 517 635 637|508 517 563 614 w|543 562 587 590 w|567 589 592 605|579 586 589 605|540 586 605 611 w|537 559 605 613|481 517 560 564|483 499 517 527|444 457 506 507|441 454 460 480 w|438 460 493 512 w|474 493 526 592 w|492 514 526 560|495 514 539 542 w|532 543 572 584 w|558 565 571 584|480 490 566 578|458 469 490 503|453 469 536 563 w|525 532 535 575|508 514 542 545|498 505 514 540|486 505 517 540 w|312 337 517 545|291 337 395 402 w|348 367 394 404|352 358 368 386|351 358 374 386 w|306 313 376 389|294 313 341 360 w|300 331 341 365|252 283 331 383|276 283 311 318 w|306 310 320 341 w|312 319 383 411 w|300 328 383 411|183 328 422 434 w|350 379 422 434|336 346 383 389|309 340 346 351|309 340 401 404 w|352 361 401 404|333 361 413 425 w|390 412 431 431 w|408 409 449 453|397 405 408 419|354 376 407 416`,
    average: `40,775 65,766 88,758 112,761 136,766 160,763 184,757 208,763 232,775 256,781 280,784 304,790 328,798 352,803 376,811 400,820 424,826 448,826 472,823 496,840 510,845 536,845 568,832 592,820 616,807 640,787 664,762 688,740 712,717 736,694 760,681 784,660 808,636 832,606 856,583 880,566 904,554 928,547 1000,548 1048,554 1072,559 1105,560 1144,573 1168,584 1192,590 1216,594 1240,604 1312,601 1336,597 1384,588 1408,577 1432,564 1456,551 1480,543 1504,536 1576,535 1600,526 1624,519 1660,512 1720,512 1744,515 1768,509 1792,500 1816,489 1840,477 1864,465 1888,448 1912,433 1936,421 1960,406 1984,391 2008,378 2032,368 2056,355 2080,346 2104,349 2152,343 2200,346 2224,352 2248,361 2272,366 2296,374 2310,376`
  },
  gbpusd: {
    top: 132, left: 39, title: 'GBPUSD,H4  1.21698 1.21958 1.21693 1.21953',
    rows: [18, 67, 116, 165, 214, 263], scale: ['1.24370', '', '1.19465', '1.16990', '1.14515', '1.12085'],
    price: 66, tag: '1.21953',
    dates: ['3 Nov 2022', '9 Nov 04:00', '15 Nov 04:00', '21 Nov 04:00', '25 Nov 04:00', '1 Dec 04:00', '7 Dec 04:00', '13 Dec 04:00', '19 Dec 04:00'],
    bars: `795 805 801|801 901 895|885 954 940|906 954 940|937 957 952|928 959 928|900 935 925|898 930 915|867 959 883|843 889 846|816 855 852|840 867 850|838 860 846|765 872 775|759 792 768|736 783 738|720 744 740|722 748 740|736 768 750|747 780 751|750 792 780|687 783 700|697 740 724|711 740 729|711 741 726|705 783 775|759 804 798|783 831 820|816 849 835|810 840 814|798 822 801|798 830 826|654 828 681|636 690 660|609 662 621|618 660 658|615 666 622|585 633 594|570 615 579|564 621 567|534 570 567|558 580 573|570 602 600|549 600 567|558 606 594|588 623 592|567 600 597|594 606 600|576 606 583|540 588 553|432 558 468|456 537 513|510 576 540|516 543 540|516 553 528|504 540 510|483 534 525|504 552 507|492 519 498|493 518 514|495 526 511|474 528 517|514 591 589|540 591 546|528 549 531|507 537 516|489 519 507|477 519 493|480 516 505|486 528 517|514 525 519|510 543 535|525 561 549|543 573 564|549 576 562|549 581 571|549 573 556|534 561 538|532 549 541|514 555 532|507 543 520|519 540 520|510 526 517|501 525 517|514 526 517|486 525 495|459 508 466|399 471 430|402 438 418|390 424 396|381 405 394|393 411 394|369 400 378|357 381 376|372 387 382|378 391 387|372 406 388|372 411 402|375 417 400|381 408 390|387 411 408|402 432 427|411 435 420|378 424 390|381 412 403|399 450 447|446 485 477|451 481 454|427 456 441|411 460 457|430 460 457|439 481 466|459 484 480|453 487 460|453 468 460|432 480 438|432 456 454|432 510 484|396 498 412|384 422 400|382 406 388|356 408 358|303 366 322|264 327 294|282 306 298|282 312 303|299 318 313|270 315 286|273 372 340|270 351 283|270 295 283|249 286 256|243 266 250|247 292 280|258 309 292|285 354 340|331 354 338|315 346 325|318 346 330|315 358 343|306 358 330|288 360 343|339 376 372|357 376 363|360 378 373|351 387 373|312 375 320|309 334 316|309 336 328|321 343 338|331 346 337|325 357 343|309 360 322|298 328 310|300 315 312|285 315 288|285 306 294|288 310 301|282 330 288|255 300 278|276 297 292|288 321 317|306 324 313|282 327 286|270 290 273|269 304 282|279 300 289|282 296 286|267 301 282|267 300 290|186 292 204|184 240 228|222 243 232|225 244 238|234 244 238|207 244 214|208 240 226|195 237 199|180 244 196|192 217 211|205 229 214|207 273 246|234 279 259|234 357 354|327 357 343|325 348 328|315 333 325|315 381 363|318 369 337|315 360 342|336 355 350|330 363 331|328 351 348|330 351 331`,
    average: `52,757 64,768 88,796 112,825 136,850 150,862 172,874 196,881 220,877 244,855 268,826 292,802 316,774 340,757 364,750 388,756 412,768 427,774 448,762 460,751 484,741 511,717 532,688 556,651 580,616 592,602 604,595 628,592 655,568 670,563 700,561 736,547 784,523 832,527 856,519 892,519 928,531 952,535 990,534 1024,538 1066,538 1084,530 1108,510 1132,486 1156,462 1180,441 1204,421 1228,405 1252,394 1290,395 1312,401 1348,415 1396,436 1432,449 1468,458 1492,448 1522,430 1552,397 1588,364 1612,340 1636,313 1660,297 1684,296 1732,304 1768,318 1804,338 1840,343 1890,342 1930,327 1960,312 1996,310 2040,295 2080,289 2140,267 2176,249 2212,230 2245,229 2260,243 2284,257 2320,285 2366,317`
  },
  usdchf: {
    top: 123, left: 27, split: true, title: 'USDCHF,H4  0.93281 0.93307 0.92996 0.93040',
    rows: [22, 71, 120, 169], scale: ['1.00950', '0.98250', '0.95600', ''],
    price: 167, tag: '0.93040', study: 'MACD(12,26,9) -0.00010 -0.00100',
    levels: [[216, '#778899']], studyScale: [[199, '0.00501'], [216, '0.00'], [274, '-0.01323']],
    dates: ['3 Nov 2022', '9 Nov 04:00', '15 Nov 04:00', '21 Nov 04:00', '25 Nov 04:00', '1 Dec 04:00', '7 Dec 04:00', '13 Dec 04:00', '19 Dec 04:00'],
    bars: `225 240 232|162 192 172|165 177 174|160 192 170|165 178 170|168 186 178|174 192 186|177 190 188|182 240 230|-|-|-|-|-|-|-|-|-|-|-|-|-|-|-|-|-|-|-|-|-|-|-|-|420 430 426|420 446 432|420 446 430|418 440 434|432 468 466|453 546 522|489 564 560|555 573 568|543 570 548|522 552 526|525 558 540|521 552 541|528 570 560|553 570 558|543 564 548|540 552 547|543 581 575|555 597 575|534 576 546|534 564 546|534 552 544|531 552 547|540 573 566|555 581 560|543 570 548|540 555 546|540 552 541|534 555 541|528 555 532|501 535 502|483 513 502|500 514 506|499 513 508|499 516 508|499 519 512|489 516 498|489 516 499|487 502 496|484 501 493|478 499 484|462 486 466|462 483 471|462 480 466|463 475 471|466 486 479|469 484 475|471 490 487|483 513 508|492 513 508|501 512 508|505 513 510|498 516 510|507 526 508|498 528 520|519 558 546|543 567 559|553 572 570|567 579 574|544 576 550|546 564 558|546 564 553|546 561 556|541 560 550|543 562 550|534 558 544|516 546 524|517 552 543|534 549 540|525 546 534|526 543 537|532 570 556|543 570 554|525 560 528|516 531 522|513 528 523|520 537 535|501 540 505|496 528 503|490 516 502|489 510 500|489 510 500|492 508 500|489 520 516|504 528 507|490 530 507|498 552 543|540 558 552|543 566 555|540 564 552|537 573 565|560 588 583|576 592 588|582 594 584|580 588 583|580 607 600|549 612 562|549 597 586|573 594 583|580 600 597|594 608 600|588 612 606|588 608 590|555 594 556|552 567 562|558 574 562|552 573 556|540 561 552|552 582 577|557 584 562|555 570 562|552 567 560|549 572 558|552 567 562|557 591 585|564 594 568|562 579 568|557 570 562|555 570 561|555 574 558|555 580 573|572 600 590|582 596 591|588 610 606|597 613 606|598 610 603|579 612 602|591 618 610|600 615 612|588 615 592|588 600 590|588 612 608|604 618 610|585 615 597|582 603 594|583 600 598|591 603 598|585 606 594|585 658 650|627 666 628|624 645 634|630 652 633|630 648 633|627 645 639|636 651 648|640 668 656|639 675 664|645 675 652|645 658 652|627 657 630|624 643 640|618 666 622|615 642 635|630 648 640|637 652 644|624 651 630|618 636 622|606 630 610|606 616 609|600 618 614|600 625 610|608 627 626`,
    histogram: `40,755 52,750 100,730 124,728 148,745 160,760 172,768 184,772 196,780 208,795 232,812 268,818 292,824 330,828 370,828 412,826 424,830 436,846 460,870 484,888 508,930 532,953 556,953 604,946 640,935 664,910 688,898 712,887 736,870 760,856 784,832 808,810 832,796 856,788 880,778 904,772 916,766 928,757 952,750 988,750 1012,764 1036,772 1060,772 1084,785 1108,806 1144,819 1192,816 1228,800 1264,793 1288,792 1324,778 1348,772 1372,766 1408,753 1456,762 1480,772 1504,780 1528,800 1552,812 1564,816 1590,812 1636,822 1660,810 1684,795 1708,786 1756,779 1792,778 1840,774 1876,775 1900,787 1924,797 1960,800 2008,800 2056,793 2080,794 2104,804 2140,810 2176,818 2200,820 2236,808 2284,796 2308,785 2332,774 2344,772`,
    signal: `40,760 64,753 88,745 112,734 136,724 160,720 184,731 208,745 240,772 264,795 292,812 328,825 360,829 412,829 440,833 472,845 496,860 520,885 544,912 568,932 592,946 616,951 640,945 664,940 688,932 712,917 736,903 760,888 784,873 808,853 832,832 856,817 880,801 904,787 928,777 952,766 976,757 1000,751 1024,752 1060,756 1084,765 1108,780 1132,789 1168,805 1204,815 1240,811 1276,804 1336,789 1372,780 1396,770 1440,757 1480,760 1516,771 1552,790 1588,805 1636,817 1672,815 1720,804 1768,786 1816,780 1888,778 1912,783 1950,792 2000,799 2070,796 2140,804 2188,813 2236,816 2284,810 2320,798 2344,788`
  },
  usdjpy: {
    top: 123, left: 27, split: true, title: 'USDJPY,H4  136.196 136.197 135.801 135.802',
    rows: [22, 71, 120, 169], scale: ['139.515', '137.730', '', '134.125'],
    price: 124, tag: '135.802', study: 'CCI(14) -95.3311',
    levels: [[216, '#c0c0c0'], [231, '#778899'], [246, '#c0c0c0']], studyScale: [[199, '258.5986'], [216, '100'], [231, '0.00'], [246, '-100'], [274, '-328.8997']],
    dates: ['25 Nov 2022', '29 Nov 12:00', '1 Dec 12:00', '5 Dec 12:00', '7 Dec 12:00', '9 Dec 12:00', '13 Dec 12:00', '15 Dec 12:00'],
    candles: `-|185 187 190 300|-|-|-|-|-|-|-|-|-|-|-|-|-|-|-|-|-|-|183 190 300 320|400 405 420 441|400 405 446 465 w|420 445 451 494 w|435 451 462 495 w|450 462 526 535 w|517 526 542 546 w|510 542 550 560 w|531 545 550 558|543 547 644 675 w|480 526 644 653|498 526 590 608 w|577 590 614 624 w|582 598 622 632 w|588 598 622 626|520 541 598 600|495 508 542 560|424 427 508 512|408 425 429 440|423 427 439 456 w|381 400 438 441|360 400 415 438 w|415 415 446 483 w|405 408 445 456|390 403 409 414|366 402 406 415|358 364 403 411|327 346 364 375|340 346 430 432 w|408 430 453 460 w|426 430 453 460|391 406 430 462|375 390 406 429|384 390 397 432 w|385 397 428 456 w|426 427 433 441 w|420 427 433 435|405 430 470 474 w|450 466 471 499|451 463 468 477|423 462 476 514 w|408 438 476 480|423 427 440 450|402 409 433 444|382 396 409 423|384 397 428 429 w|375 397 428 429|339 352 397 403|327 343 352 363|324 342 345 368|318 342 353 357 w|333 343 353 370|328 343 550 568 w|528 535 550 590|507 511 536 540|499 511 518 535|507 511 527 532 w|510 527 544 555 w|543 544 566 605 w|547 553 563 570|480 522 553 597|516 522 526 545|483 511 528 530|414 433 512 515|400 432 445 453 w|303 307 446 466|300 307 344 348 w|330 331 371 375 w|366 366 370 402|363 367 383 414 w|376 382 396 410 w|365 394 445 447 w|424 424 446 456|430 490 492 495|450 462 491 500|462 463 497 497 w`,
    cci: [815, 811, 811, 815, 855, 898, 855, 815, 802, 807, 835, 862, 848, 835, 825, 808, 813, 797, 740, 720, 850, 955, 938, 908, 883, 879, 873, 865, 862, 871, 850, 850, 859, 859, 855, 825, 795, 742, 728, 747, 755, 766, 790, 784, 781, 781, 778, 764, 797, 837, 850, 829, 796, 815, 843, 850, 844, 868, 883, 865, 872, 830, 813, 782, 766, 790, 770, 731, 733, 750, 762, 773, 870, 908, 880, 868, 861, 860, 865, 855, 842, 838, 825, 793, 765, 712, 730, 760, 778, 787, 794, 808, 818, 843, 850, 860]
  }
};

const GRID = '#778899';
const LIME = '#00ff00';

function draw(box) {
  const c = charts[box.dataset.chart];
  const width = box.clientWidth, height = box.clientHeight;
  const right = width - 57, bottom = height - 24;
  const toY = v => Math.round((v - c.top) / 3);
  const toX = v => Math.round((v - c.left) / 3);
  const out = [];
  const line = (x1, y1, x2, y2, color, extra = '') =>
    out.push(`<line x1="${x1}" y1="${y1}" x2="${x2}" y2="${y2}" stroke="${color}" ${extra}/>`);
  const text = (x, y, str, color = '#fff') =>
    str && out.push(`<text x="${x}" y="${y}" fill="${color}" xml:space="preserve">${str}</text>`);
  const parse = s => s.split(' ').map(p => p.split(',').map(Number));
  const path = (points, color, extra = '') =>
    out.push(`<polyline points="${points.map(p => p.join()).join(' ')}" fill="none" stroke="${color}" ${extra}/>`);

  for (let x = 52; x < right; x += 48) line(x, 3, x, bottom, GRID, 'stroke-dasharray="3 3"');
  c.rows.forEach((y, i) => {
    line(4, y, right - 4, y, GRID, 'stroke-dasharray="3 3"');
    line(right, y, right + 2, y, '#fff');
    text(right + 7, y + 5, c.scale[i]);
  });
  (c.levels || []).forEach(([y, color]) => line(4, y, right - 4, y, color, 'stroke-dasharray="3 2"'));
  line(4, c.price, right, c.price, '#8494a6');

  if (c.histogram) {
    const points = parse(c.histogram).map(([x, y]) => [toX(x), toY(y)]);
    let k = 0;
    for (let x = 4; x <= points[points.length - 1][0]; x += 4) {
      while (k < points.length - 2 && points[k + 1][0] < x) k++;
      const [x0, y0] = points[k], [x1, y1] = points[k + 1];
      const y = Math.round(y0 + (y1 - y0) * (x - x0) / (x1 - x0));
      if (y !== 216) line(x, 216, x, y, '#c0c0c0');
    }
    path(parse(c.signal).map(([x, y]) => [toX(x), toY(y)]), '#ff0000', 'stroke-dasharray="3 3"');
  }
  if (c.cci) path(c.cci.map((v, i) => [4 + i * 8, toY(v)]), '#20b2aa');

  if (c.candles) c.candles.split('|').forEach((item, i) => {
    if (item === '-') return;
    const [high, top, base, low, falling] = item.split(' ');
    const x = 4 + i * 8, y1 = toY(top), y2 = toY(base);
    line(x, toY(high), x, toY(low), LIME);
    const fill = y2 - y1 < 2 ? LIME : falling ? '#fff' : '#000';
    out.push(`<rect x="${x - 2}" y="${y1}" width="4" height="${y2 - y1}" fill="${fill}" stroke="${LIME}"/>`);
  });
  if (c.bars) {
    let open = null;
    c.bars.split('|').forEach((item, i) => {
      if (item === '-') { open = null; return; }
      const [high, low, close] = item.split(' ').map(toY);
      const x = 4 + i * 4;
      line(x, high, x, low, LIME);
      if (open !== null) line(x - 2, open, x, open, LIME);
      line(x, close, x + 2, close, LIME);
      open = close;
    });
  }
  if (c.average) path(parse(c.average).map(([x, y]) => [toX(x), toY(y)]), '#ff0000');

  const panes = c.split ? [[2, 188], [190, bottom]] : [[2, bottom]];
  if (c.split) out.push(`<rect x="0" y="189" width="${right}" height="1" fill="#000" stroke="none"/>`);
  panes.forEach(([a, b]) => out.push(`<rect x="3" y="${a}" width="${right - 3}" height="${b - a}" fill="none" stroke="#fff"/>`));
  c.dates.forEach((label, i) => {
    const x = 4 + i * 96;
    line(x, bottom, x, bottom + 3, '#fff');
    text(x - 1, bottom + 16, label);
  });
  (c.studyScale || []).forEach(([y, label]) => {
    line(right, y, right + 2, y, '#fff');
    text(right + 4, y + 5, label);
  });
  out.push(`<rect x="${right + 3}" y="${c.price - 7}" width="54" height="13" fill="#fff" stroke="#fff"/>`);
  text(right + 7, c.price + 5, c.tag, '#000');
  out.push('<path d="M7 14l4-4 4 4z" fill="#fff"/>');
  text(21, 16, c.title);
  if (c.study) text(7, 206, c.study);

  const old = box.querySelector('.plot');
  if (old) old.remove();
  box.insertAdjacentHTML('afterbegin',
    `<svg class="plot"><g shape-rendering="crispEdges" transform="translate(.5 .5)">${out.join('')}</g></svg>`);
}

const drawAll = () => document.querySelectorAll('.chart').forEach(draw);
drawAll();
window.addEventListener('resize', drawAll);
```
